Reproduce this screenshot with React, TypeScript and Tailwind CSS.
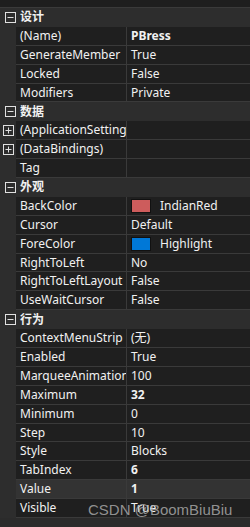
type Row =
  | { kind: "cat"; label: string }
  | { kind: "prop"; name: string; value?: string; bold?: boolean; expand?: boolean; swatch?: string; highlight?: boolean };

const rows: Row[] = [
  { kind: "cat", label: "设计" },
  { kind: "prop", name: "(Name)", value: "PBress", bold: true },
  { kind: "prop", name: "GenerateMember", value: "True" },
  { kind: "prop", name: "Locked", value: "False" },
  { kind: "prop", name: "Modifiers", value: "Private" },
  { kind: "cat", label: "数据" },
  { kind: "prop", name: "(ApplicationSettings)", expand: true },
  { kind: "prop", name: "(DataBindings)", expand: true },
  { kind: "prop", name: "Tag", value: "" },
  { kind: "cat", label: "外观" },
  { kind: "prop", name: "BackColor", value: "IndianRed", swatch: "#cd5c5c" },
  { kind: "prop", name: "Cursor", value: "Default" },
  { kind: "prop", name: "ForeColor", value: "Highlight", swatch: "#0078d7" },
  { kind: "prop", name: "RightToLeft", value: "No" },
  { kind: "prop", name: "RightToLeftLayout", value: "False" },
  { kind: "prop", name: "UseWaitCursor", value: "False" },
  { kind: "cat", label: "行为" },
  { kind: "prop", name: "ContextMenuStrip", value: "(无)" },
  { kind: "prop", name: "Enabled", value: "True" },
  { kind: "prop", name: "MarqueeAnimationSpeed", value: "100" },
  { kind: "prop", name: "Maximum", value: "32", bold: true },
  { kind: "prop", name: "Minimum", value: "0" },
  { kind: "prop", name: "Step", value: "10" },
  { kind: "prop", name: "Style", value: "Blocks" },
  { kind: "prop", name: "TabIndex", value: "6", bold: true },
  { kind: "prop", name: "Value", value: "1", bold: true, highlight: true },
  { kind: "prop", name: "Visible", value: "True" },
];

function Box({ plus }: { plus?: boolean }) {
  return (
    <svg width="11" height="11" viewBox="0 0 11 11" className="shrink-0">
      <rect x="0.5" y="0.5" width="10" height="10" fill="none" stroke="#e0e0e0" strokeWidth="1" />
      <line x1="2.5" y1="5.5" x2="8.5" y2="5.5" stroke="#e0e0e0" strokeWidth="1" />
      {plus && <line x1="5.5" y1="2.5" x2="5.5" y2="8.5" stroke="#e0e0e0" strokeWidth="1" />}
    </svg>
  );
}

export default function App() {
  return (
    <div
      className="relative w-[250px] h-[527px] overflow-hidden bg-[#2b2b2b] text-[12px] text-[#f1f1f1]"
      style={{ fontFamily: "'Noto Sans', 'Noto Sans CJK SC', sans-serif" }}
    >
      <div className="h-[8px] bg-[#1e1e1e] border-b border-[#3a3a3a]" />
      {rows.map((r, i) =>
        r.kind === "cat" ? (
          <div key={i} className="h-[18.9px] flex items-center bg-[#2d2d2d]">
            <div className="w-[20px] flex justify-center pl-[1px]">
              <Box />
            </div>
            <span className="font-bold leading-none">{r.label}</span>
          </div>
        ) : (
          <div key={i} className="h-[18.9px] flex bg-[#2d2d2d]">
            <div className="w-[16px] flex items-center justify-center">{r.expand && <Box plus />}</div>
            <div
              className={`w-[110px] flex items-center pl-[4px] overflow-hidden whitespace-nowrap border-b border-[#3a3a3a] ${
                r.highlight ? "bg-[#333333]" : "bg-[#1f1f1f]"
              }`}
            >
              {r.name}
            </div>
            <div className="w-px bg-[#3a3a3a]" />
            <div
              className={`flex-1 flex items-center pl-[4px] overflow-hidden whitespace-nowrap border-b border-[#3a3a3a] ${
                r.highlight ? "bg-[#333333]" : "bg-[#1f1f1f]"
              } ${r.bold ? "font-bold" : ""}`}
            >
              {r.swatch && (
                <span
                  className="w-[20px] h-[14px] border border-[#111] mr-[9px] shrink-0"
                  style={{ background: r.swatch }}
                />
              )}
              {r.value}
            </div>
          </div>
        )
      )}
      <div
        className="absolute left-[88px] top-[499px] text-[15px] text-[#b0b0b0]/80 whitespace-nowrap"
        style={{ fontFamily: "'Liberation Sans', Arial, sans-serif" }}
      >
        CSDN @BoomBiuBiu
      </div>
    </div>
  );
}
